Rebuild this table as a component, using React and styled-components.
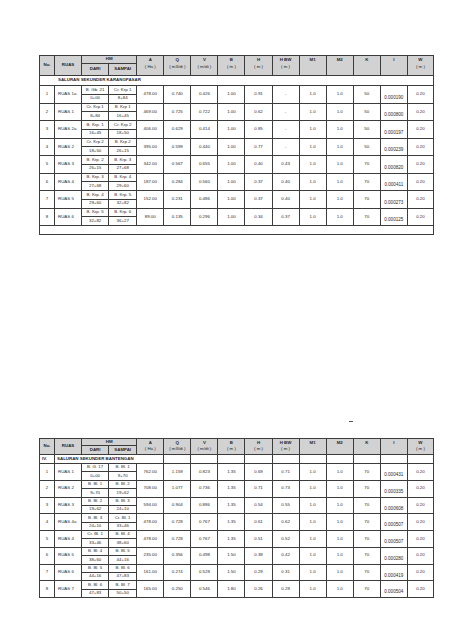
import React from "react";
import styled, { createGlobalStyle } from "styled-components";

const Global = createGlobalStyle`
  html, body { margin: 0; padding: 0; background: #fff; }
  body { font-family: "Liberation Sans", Arial, sans-serif; color: #2a2a2a; -webkit-font-smoothing: antialiased; }
`;

const Page = styled.div`
  width: 474px;
  height: 632px;
  padding: 55px 0 0 39px;
  box-sizing: border-box;
  overflow: hidden;
`;

const Sheet = styled.table`
  width: 395px;
  table-layout: fixed;
  border-collapse: collapse;
  border: 1px solid #333;
`;

const Row = styled.tr`
  height: ${(p) => p.$h}px;
`;

const Head = styled.th`
  background: #d2d2d2;
  border: 1px solid #3c3c3c;
  padding: 0;
  font-size: 4.4px;
  font-weight: 700;
  line-height: 1;
  text-align: center;
  vertical-align: ${(p) => p.$v || "middle"};
  white-space: nowrap;
  overflow: hidden;
  color: #262626;
`;

const Label = styled.div`
  padding-top: ${(p) => p.$top}px;
`;

const Unit = styled.div`
  font-weight: 400;
  margin-top: ${(p) => p.$gap}px;
`;

const Cell = styled.td`
  border: 1px solid #3c3c3c;
  padding: ${(p) => (p.$v === "bottom" ? "0 0 2px 0" : p.$align === "left" ? "0 0 0 3px" : "0")};
  font-size: ${(p) => p.$fs || 4.4}px;
  line-height: 1;
  text-align: ${(p) => p.$align || "center"};
  vertical-align: ${(p) => p.$v || "middle"};
  white-space: nowrap;
  overflow: hidden;
  color: #2a2a2a;
`;

const SectionCell = styled.td`
  border: 1px solid #3c3c3c;
  padding: 0 0 0 ${(p) => p.$pad || 2}px;
  font-size: 4.4px;
  font-weight: 700;
  line-height: 1;
  text-align: left;
  vertical-align: middle;
  white-space: nowrap;
  overflow: visible;
  color: #262626;
`;

const Gap = styled.div`
  height: 203px;
  box-sizing: border-box;
  padding: 186px 0 0 310px;
`;

const Dash = styled.div`
  width: 4px;
  height: 1px;
  background: #555;
`;

const widths = [15, 27, 27, 28, 27, 27, 27, 27, 27, 27, 27, 27, 27, 27, 26];

const Cols = () => (
  <colgroup>
    {widths.map((w, i) => (
      <col key={i} style={{ width: w }} />
    ))}
  </colgroup>
);

const tableA = [
  ["1", "RUAS 1a", "B. Gb. 21", "0+00", "Cr. Krp 1", "8+84", "478.00", "0.740", "0.426", "1.00", "0.91", "-", "1.0", "1.0", "50", "0.000190", "0.20"],
  ["2", "RUAS 1", "Cr. Krp 1", "8+84", "B. Krp 1", "16+45", "469.00", "0.725", "0.722", "1.00", "0.62", "-", "1.0", "1.0", "50", "0.000800", "0.20"],
  ["3", "RUAS 2a", "B. Krp. 1", "16+45", "Cr. Krp 2", "18+50", "406.00", "0.629", "0.414", "1.00", "0.85", "-", "1.0", "1.0", "50", "0.000197", "0.20"],
  ["4", "RUAS 2", "Cr. Krp 2", "18+50", "B. Krp 2", "26+15", "395.00", "0.599", "0.440", "1.00", "0.77", "-", "1.0", "1.0", "50", "0.000239", "0.20"],
  ["5", "RUAS 3", "B. Krp. 2", "26+15", "B. Krp. 3", "27+68", "342.00", "0.567", "0.655", "1.00", "0.40", "0.43", "1.0", "1.0", "70", "0.000820", "0.20"],
  ["6", "RUAS 4", "B. Krp. 3", "27+68", "B. Krp. 4", "29+60", "187.00", "0.284", "0.560", "1.00", "0.37", "0.40", "1.0", "1.0", "70", "0.000411", "0.20"],
  ["7", "RUAS 5", "B. Krp. 4", "29+60", "B. Krp. 5", "32+82", "152.00", "0.231", "0.486", "1.00", "0.37", "0.40", "1.0", "1.0", "70", "0.000273", "0.20"],
  ["8", "RUAS 6", "B. Krp. 5", "32+82", "B. Krp. 6", "36+27", "89.00", "0.135", "0.296", "1.00", "0.34", "0.37", "1.0", "1.0", "70", "0.000125", "0.20"],
];

const tableB = [
  ["1", "RUAS 1", "B. G. 17", "0+00", "B. Bl. 1", "9+70", "762.00", "1.159", "0.823", "1.35", "0.69", "0.71", "1.0", "1.0", "70", "0.000431", "0.20"],
  ["2", "RUAS 2", "B. Bl. 1", "9+70", "B. Bl. 2", "19+62", "708.00", "1.077", "0.736", "1.35", "0.71", "0.73", "1.0", "1.0", "70", "0.000335", "0.20"],
  ["3", "RUAS 3", "B. Bl. 2", "19+62", "B. Bl. 3", "24+10", "594.00", "0.904", "0.886", "1.35", "0.54", "0.55", "1.0", "1.0", "70", "0.000608", "0.20"],
  ["4", "RUAS 4a", "B. Bl. 3", "24+10", "Cr. Bl. 1", "33+46", "478.00", "0.728", "0.767", "1.35", "0.61", "0.62", "1.0", "1.0", "70", "0.000507", "0.20"],
  ["5", "RUAS 4", "Cr. Bl. 1", "33+46", "B. Bl. 4", "38+60", "478.00", "0.728", "0.767", "1.35", "0.51", "0.52", "1.0", "1.0", "70", "0.000507", "0.20"],
  ["6", "RUAS 5", "B. Bl. 4", "38+60", "B. Bl. 5", "44+16", "235.00", "0.356", "0.498", "1.50", "0.38", "0.42", "1.0", "1.0", "70", "0.000280", "0.20"],
  ["7", "RUAS 6", "B. Bl. 5", "44+16", "B. Bl. 6", "47+83", "161.00", "0.274", "0.528", "1.50", "0.29", "0.31", "1.0", "1.0", "70", "0.000419", "0.20"],
  ["8", "RUAS 7", "B. Bl. 6", "47+83", "B. Bl. 7", "50+50", "165.00", "0.250", "0.546", "1.80", "0.26", "0.28", "1.0", "1.0", "70", "0.000504", "0.20"],
];

const units = [
  ["A", "( Ha )"],
  ["Q", "( m3/dt )"],
  ["V", "( m/dt )"],
  ["B", "( m )"],
  ["H", "( m )"],
  ["H BW", "( m )"],
  ["M1", ""],
  ["M2", ""],
  ["K", ""],
  ["I", ""],
  ["W", "( m )"],
];

const Header = ({ h1, h2, top, gap }) => (
  <>
    <Row $h={h1}>
      <Head rowSpan={2}>No.</Head>
      <Head rowSpan={2}>RUAS</Head>
      <Head colSpan={2}>HM</Head>
      {units.map(([t, u]) => (
        <Head key={t} rowSpan={2} $v="top">
          <Label $top={top}>{t}</Label>
          <Unit $gap={gap}>{u || "\u00a0"}</Unit>
        </Head>
      ))}
    </Row>
    <Row $h={h2}>
      <Head>DARI</Head>
      <Head>SAMPAI</Head>
    </Row>
  </>
);

const DataRows = ({ rows, h }) =>
  rows.map((r) => {
    const [no, ruas, d1, d2, s1, s2, ...rest] = r;
    return (
      <React.Fragment key={no}>
        <Row $h={h / 2}>
          <Cell rowSpan={2}>{no}</Cell>
          <Cell rowSpan={2} $align="left">
            {ruas}
          </Cell>
          <Cell>{d1}</Cell>
          <Cell>{s1}</Cell>
          {rest.map((v, i) => (
            <Cell
              key={i}
              rowSpan={2}
              $v={i === 9 ? "bottom" : "middle"}
              $fs={i === 9 ? 4.6 : 4.4}
            >
              {v}
            </Cell>
          ))}
        </Row>
        <Row $h={h / 2}>
          <Cell>{d2}</Cell>
          <Cell>{s2}</Cell>
        </Row>
      </React.Fragment>
    );
  });

export default function App() {
  return (
    <Page>
      <Global />
      <Sheet>
        <Cols />
        <tbody>
          <Header h1={8} h2={12} top={2} gap={3} />
          <Row $h={10}>
            <SectionCell colSpan={15} $pad={18}>
              SALURAN SEKUNDER KARANGPASAR
            </SectionCell>
          </Row>
          <DataRows rows={tableA} h={17.5} />
          <Row $h={9}>
            <SectionCell colSpan={15} />
          </Row>
        </tbody>
      </Sheet>
      <Gap>
        <Dash />
      </Gap>
      <Sheet>
        <Cols />
        <tbody>
          <Header h1={7} h2={9} top={1.5} gap={2.5} />
          <Row $h={9}>
            <SectionCell>IV.</SectionCell>
            <SectionCell colSpan={4}>SALURAN SEKUNDER BANTENGAN</SectionCell>
            {Array.from({ length: 10 }).map((_, i) => (
              <SectionCell key={i} />
            ))}
          </Row>
          <DataRows rows={tableB} h={16.75} />
        </tbody>
      </Sheet>
    </Page>
  );
}
